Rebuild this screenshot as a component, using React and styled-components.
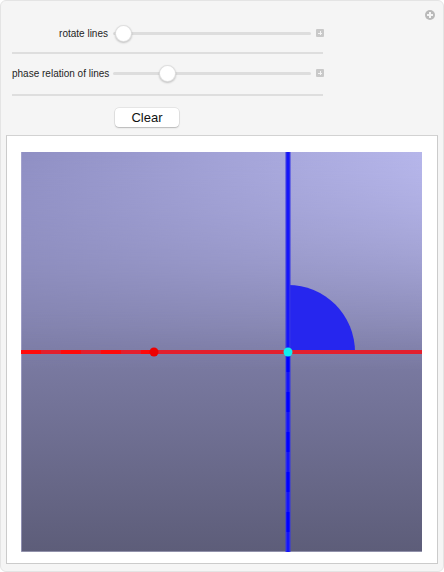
import React from "react";
import styled, { createGlobalStyle } from "styled-components";

const Global = createGlobalStyle`
  html, body { margin: 0; padding: 0; background: #ffffff; }
  body { font-family: "Liberation Sans", Arial, sans-serif; }
`;

const Panel = styled.div`
  position: relative;
  box-sizing: border-box;
  width: 444px;
  height: 572px;
  background: #f5f5f5;
  border: 1px solid #e4e4e4;
  border-radius: 6px;
`;

const CornerButton = styled.div`
  position: absolute;
  top: 9px;
  right: 8px;
  width: 10px;
  height: 10px;
  border-radius: 50%;
  background: #b9b9b9;
  display: flex;
  align-items: center;
  justify-content: center;
  &::before, &::after {
    content: "";
    position: absolute;
    background: #f5f5f5;
  }
  &::before { width: 6px; height: 2px; }
  &::after { width: 2px; height: 6px; }
`;

const Controls = styled.div`
  display: flex;
  flex-direction: column;
  padding: 24px 0 0 11px;
`;

const Row = styled.div`
  display: flex;
  align-items: center;
  height: 16px;
  margin-top: ${(p) => p.$top}px;
`;

const Label = styled.div`
  width: 96px;
  text-align: right;
  font-size: 10px;
  color: #1e1e1e;
  white-space: nowrap;
  margin-right: 5px;
`;

const Track = styled.div`
  position: relative;
  width: 198px;
  height: 3px;
  border-radius: 2px;
  background: #dddddd;
  margin-right: 5px;
`;

const Thumb = styled.div`
  position: absolute;
  top: 50%;
  width: 15px;
  height: 15px;
  margin-top: -8px;
  margin-left: -8px;
  border-radius: 50%;
  background: #ffffff;
  border: 0.5px solid rgba(0, 0, 0, 0.12);
  box-shadow: 0 1px 2px rgba(0, 0, 0, 0.22);
`;

const PlusBox = styled.div`
  position: relative;
  width: 8px;
  height: 8px;
  background: #c9c9c9;
  border-radius: 1px;
  display: flex;
  align-items: center;
  justify-content: center;
  &::before, &::after {
    content: "";
    position: absolute;
    background: #f4f4f4;
  }
  &::before { width: 4px; height: 1px; }
  &::after { width: 1px; height: 4px; }
`;

const Separator = styled.div`
  width: 311px;
  height: 2px;
  background: #dedede;
  margin-top: ${(p) => p.$top}px;
`;

const ButtonRow = styled.div`
  display: flex;
  padding-left: 103px;
  margin-top: 12px;
`;

const ClearButton = styled.button`
  width: 64px;
  height: 19px;
  padding: 0;
  border: none;
  border-radius: 4px;
  background: #ffffff;
  box-shadow: 0 0 0 0.5px rgba(0, 0, 0, 0.12), 0 1px 1.5px rgba(0, 0, 0, 0.2);
  font-family: "Liberation Sans", Arial, sans-serif;
  font-size: 13px;
  color: #111;
  line-height: 19px;
`;

const Frame = styled.div`
  box-sizing: border-box;
  width: 432px;
  height: 429px;
  margin: 8px 0 0 5px;
  background: #ffffff;
  border: 1px solid #cbcbcb;
  border-top: 1px solid #d2d2d2;
  padding: 16px 0 0 14px;
`;

const PlotSvg = styled.svg`
  display: block;
`;

function Slider({ pos }) {
  return (
    <Track>
      <Thumb style={{ left: `${pos}px` }} />
    </Track>
  );
}

function Plot() {
  const W = 401;
  const H = 400;
  const cx = 267;
  const cy = 200;
  const dashes = [];
  for (let x = 0; x < 133; x += 40) {
    dashes.push(
      <line key={x} x1={x} y1={cy} x2={Math.min(x + 20, 133)} y2={cy} stroke="#ff0a0a" strokeWidth="4" />
    );
  }
  return (
    <PlotSvg width={W} height={H} viewBox={`0 0 ${W} ${H}`}>
      <defs>
        <linearGradient id="base" x1="0" y1="0" x2="0" y2="1">
          <stop offset="0" stopColor="#a2a2d6" />
          <stop offset="0.5" stopColor="#7b7ba3" />
          <stop offset="1" stopColor="#5d5d79" />
        </linearGradient>
        <linearGradient id="horiz" x1="0" y1="0" x2="1" y2="0">
          <stop offset="0" stopColor="#8f8fc3" />
          <stop offset="1" stopColor="#b6b6ea" />
        </linearGradient>
        <linearGradient id="fade" x1="0" y1="0" x2="0" y2="1">
          <stop offset="0" stopColor="#fff" stopOpacity="1" />
          <stop offset="0.55" stopColor="#fff" stopOpacity="0" />
        </linearGradient>
        <mask id="topMask">
          <rect x="0" y="0" width={W} height={H} fill="url(#fade)" />
        </mask>
      </defs>
      <rect x="0" y="0" width={W} height={H} fill="url(#base)" />
      <rect x="0" y="0" width={W} height={H} fill="url(#horiz)" mask="url(#topMask)" />
      <line x1="0.5" y1="0" x2="0.5" y2={H} stroke="#b0b0d4" strokeWidth="1" opacity="0.6" />
      <line x1="0" y1={H - 0.5} x2={W} y2={H - 0.5} stroke="#a8a8c0" strokeWidth="1" opacity="0.7" />
      {/* quarter disc */}
      <path d={`M${cx},${cy} L${cx},${cy - 67} A67,67 0 0 1 ${cx + 67},${cy} Z`} fill="#2626ee" />
      {/* vertical blue line */}
      <line x1={cx} y1="0" x2={cx} y2={H} stroke="#3434e6" strokeWidth="5" />
      <line x1={cx} y1="0" x2={cx} y2={H} stroke="#1515fa" strokeWidth="2.5" />
      <line x1={cx} y1={cy} x2={cx} y2={H} stroke="#0000ff" strokeWidth="3" strokeDasharray="20 20" />
      {/* horizontal red line */}
      <line x1="0" y1={cy} x2={W} y2={cy} stroke="#e2202e" strokeWidth="4" />
      {dashes}
      <circle cx="133" cy={cy} r="4.5" fill="#ee0000" />
      <circle cx={cx} cy={cy} r="4.5" fill="#11eeee" />
    </PlotSvg>
  );
}

export default function App() {
  return (
    <>
      <Global />
      <Panel>
        <CornerButton />
        <Controls>
          <Row $top={0}>
            <Label>rotate lines</Label>
            <Slider pos={10} />
            <PlusBox />
          </Row>
          <Separator $top={11} />
          <Row $top={11}>
            <Label>phase relation of lines</Label>
            <Slider pos={54} />
            <PlusBox />
          </Row>
          <Separator $top={13} />
          <ButtonRow>
            <ClearButton>Clear</ClearButton>
          </ButtonRow>
        </Controls>
        <Frame>
          <Plot />
        </Frame>
      </Panel>
    </>
  );
}
